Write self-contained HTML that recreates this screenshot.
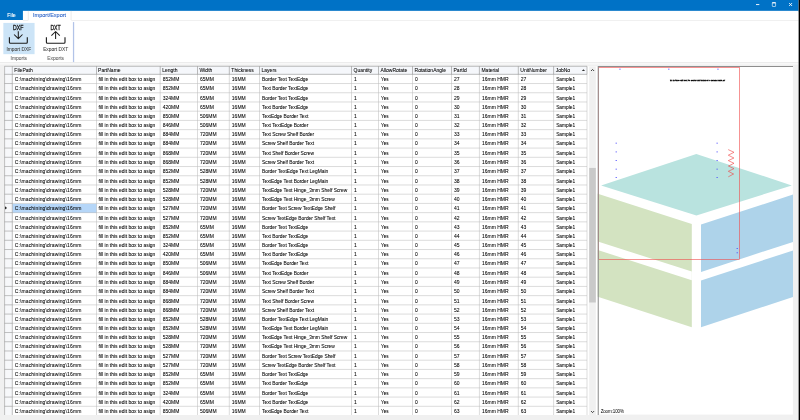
<!DOCTYPE html>
<html lang="en"><head><meta charset="utf-8"><title>Import/Export</title>
<style>
html,body{margin:0;padding:0;background:#f0f0f0;overflow:hidden;}
body{width:800px;height:420px;position:relative;font-family:"Liberation Sans",sans-serif;}
#app{position:absolute;left:0;top:0;width:1917px;height:1008px;transform:scale(0.4166667) translateZ(0);transform-origin:0 0;font-size:12px;color:#000;overflow:hidden;}
#edge{position:absolute;left:799px;top:0;width:1px;height:420px;background:#000;}
#edge2{position:absolute;left:798px;top:0;width:1px;height:420px;background:rgba(0,0,0,0.35);}
#ov{position:absolute;left:0;top:0;pointer-events:none;}
#title{position:absolute;left:0;top:0;width:1917px;height:28px;background:#0072c6;}
#tabs{position:absolute;left:0;top:26px;width:1917px;height:21.5px;background:rgba(255,255,255,0.996);}
#filetab{position:absolute;left:0;top:24px;width:55.2px;height:23.5px;background:rgba(0,114,198,0.996);color:#fff;-webkit-text-stroke:0.25px #fff;text-align:center;line-height:25px;font-size:12.5px;}
#ietab{position:absolute;left:67px;top:0;width:104px;height:22px;border-left:1px solid #cfcfcf;border-right:1px solid #cfcfcf;box-sizing:border-box;color:#2a62c8;-webkit-text-stroke:0.2px #2a62c8;text-align:center;line-height:21px;font-size:13.2px;}
#ribbon{position:absolute;left:0;top:47.5px;width:1917px;height:102.6px;background:rgba(255,255,255,0.996);border-bottom:1.4px solid #d9d9d9;box-sizing:border-box;}
.tl{position:absolute;top:47.6px;height:1.3px;background:#dcdcdc;z-index:3;}
#band{position:absolute;left:0;top:150.1px;width:1917px;height:4.6px;background:#f8f8f8;}
.btn{position:absolute;top:7.6px;width:75px;height:75px;text-align:center;}
.btn.hot{background:rgba(204,228,247,0.996);}
.btn .lbl{position:absolute;left:0;right:0;top:55.5px;font-size:11.6px;line-height:14px;color:#444;-webkit-text-stroke:0.15px #444;white-space:nowrap;}
.glbl{position:absolute;top:84.6px;width:75px;text-align:center;font-size:11.8px;line-height:14px;color:#666;-webkit-text-stroke:0.15px #666;}
.gsep{position:absolute;left:174.6px;top:5px;width:3.8px;height:96px;background:#b2c3e8;}
.grid{position:absolute;background:rgba(255,255,255,0.996);overflow:hidden;}
.hrow{position:absolute;left:0;top:0;right:0;}
.hc{position:absolute;top:0;bottom:0;box-sizing:border-box;background:rgba(245,247,251,0.996);white-space:nowrap;overflow:hidden;display:flex;align-items:center;padding-left:4.9px;}

.hc span{line-height:14px;font-size:12px;color:#000;-webkit-text-stroke:0.14px #000;position:relative;top:0.6px;}
.row{position:absolute;left:0;right:0;}
.c,.rh{position:absolute;top:0;bottom:0;box-sizing:border-box;white-space:nowrap;overflow:hidden;display:flex;align-items:center;padding-left:6.1px;}
.row .rh{background:#f7f8fa;padding:0;}
.ind{position:absolute;left:1.2px;top:6.4px;width:0;height:0;border-top:4.6px solid transparent;border-bottom:4.6px solid transparent;border-left:5.5px solid #222;}
.c span{line-height:14px;font-size:12px;color:#000;-webkit-text-stroke:0.14px #000;position:relative;top:0.7px;}
.c.fp span{letter-spacing:0.33px;}
.c.ly span{font-size:11.65px;}
.c.pn{padding-left:4.6px;}
.hc.pn{padding-left:3.8px;}
.c.fp{padding-left:5.8px;}
.c.jn span{font-size:11.6px;}
.c.ar span{font-size:11px;}
.c.cur{background:rgba(181,214,248,0.996);}
.sb{position:absolute;background:#f0f0f0;}
.thumb{position:absolute;left:0;right:0;background:#c9c9c9;}
#panel{position:absolute;background:rgba(255,255,255,0.996);overflow:hidden;}
#zoom{position:absolute;font-size:10.8px;letter-spacing:-0.3px;line-height:14px;color:#000;white-space:nowrap;}

</style></head>
<body>
<div id="app">
<div id="title"></div>
<div id="tabs"><div id="ietab">Import/Export</div></div>
<div id="filetab">File</div>
<div id="band"></div>
<div class="tl" style="left:55px;width:12.5px"></div><div class="tl" style="left:171px;width:1746px"></div>
<div id="ribbon">
<div class="btn hot" style="left:7.6px"><div class="lbl">Import DXF</div></div>
<div class="btn" style="left:96px"><div class="lbl">Export DXT</div></div>
<div class="glbl" style="left:7.6px">Imports</div>
<div class="glbl" style="left:96px">Exports</div>
<div class="gsep"></div>
</div>
<div class="grid" style="left:10.8px;top:159.0px;width:1423.44px;height:837.0px">
<div class="hrow" style="height:19.8px"><div class="hc rh" style="left:0.0px;width:18.72px"><span></span></div><div class="hc fp" style="left:18.72px;width:202.08px"><span>FilePath</span></div><div class="hc pn" style="left:220.8px;width:152.88px"><span>PartName</span></div><div class="hc ln" style="left:373.68px;width:89.52px"><span>Length</span></div><div class="hc wd" style="left:463.2px;width:76.32px"><span>Width</span></div><div class="hc th" style="left:539.52px;width:72.48px"><span>Thickness</span></div><div class="hc ly" style="left:612.0px;width:220.8px"><span>Layers</span></div><div class="hc qt" style="left:832.8px;width:64.8px"><span>Quantity</span></div><div class="hc ar" style="left:897.6px;width:81.6px"><span>AllowRotate</span></div><div class="hc ra" style="left:979.2px;width:93.6px"><span>RotationAngle</span></div><div class="hc pi" style="left:1072.8px;width:66.96px"><span>PartId</span></div><div class="hc mt" style="left:1139.76px;width:93.36px"><span>Material</span></div><div class="hc un" style="left:1233.12px;width:84.72px"><span>UnitNumber</span></div><div class="hc jn" style="left:1317.84px;width:80.16px"><span>JobNo</span></div></div>
<div class="row" style="top:19.8px;height:22.133px"><div class="rh rh" style="left:0.0px;width:18.72px"></div><div class="c fp" style="left:18.72px;width:202.08px"><span>C:\machining\drawing\16mm</span></div><div class="c pn" style="left:220.8px;width:152.88px"><span>fill in this edit box to asign</span></div><div class="c ln" style="left:373.68px;width:89.52px"><span>852MM</span></div><div class="c wd" style="left:463.2px;width:76.32px"><span>65MM</span></div><div class="c th" style="left:539.52px;width:72.48px"><span>16MM</span></div><div class="c ly" style="left:612.0px;width:220.8px"><span>Border Text TextEdge</span></div><div class="c qt" style="left:832.8px;width:64.8px"><span>1</span></div><div class="c ar" style="left:897.6px;width:81.6px"><span>Yes</span></div><div class="c ra" style="left:979.2px;width:93.6px"><span>0</span></div><div class="c pi" style="left:1072.8px;width:66.96px"><span>27</span></div><div class="c mt" style="left:1139.76px;width:93.36px"><span>16mm HMR</span></div><div class="c un" style="left:1233.12px;width:84.72px"><span>27</span></div><div class="c jn" style="left:1317.84px;width:80.16px"><span>Sample1</span></div></div>
<div class="row" style="top:41.93px;height:22.133px"><div class="rh rh" style="left:0.0px;width:18.72px"></div><div class="c fp" style="left:18.72px;width:202.08px"><span>C:\machining\drawing\16mm</span></div><div class="c pn" style="left:220.8px;width:152.88px"><span>fill in this edit box to asign</span></div><div class="c ln" style="left:373.68px;width:89.52px"><span>852MM</span></div><div class="c wd" style="left:463.2px;width:76.32px"><span>65MM</span></div><div class="c th" style="left:539.52px;width:72.48px"><span>16MM</span></div><div class="c ly" style="left:612.0px;width:220.8px"><span>Text Border TextEdge</span></div><div class="c qt" style="left:832.8px;width:64.8px"><span>1</span></div><div class="c ar" style="left:897.6px;width:81.6px"><span>Yes</span></div><div class="c ra" style="left:979.2px;width:93.6px"><span>0</span></div><div class="c pi" style="left:1072.8px;width:66.96px"><span>28</span></div><div class="c mt" style="left:1139.76px;width:93.36px"><span>16mm HMR</span></div><div class="c un" style="left:1233.12px;width:84.72px"><span>28</span></div><div class="c jn" style="left:1317.84px;width:80.16px"><span>Sample1</span></div></div>
<div class="row" style="top:64.07px;height:22.133px"><div class="rh rh" style="left:0.0px;width:18.72px"></div><div class="c fp" style="left:18.72px;width:202.08px"><span>C:\machining\drawing\16mm</span></div><div class="c pn" style="left:220.8px;width:152.88px"><span>fill in this edit box to asign</span></div><div class="c ln" style="left:373.68px;width:89.52px"><span>324MM</span></div><div class="c wd" style="left:463.2px;width:76.32px"><span>65MM</span></div><div class="c th" style="left:539.52px;width:72.48px"><span>16MM</span></div><div class="c ly" style="left:612.0px;width:220.8px"><span>Border Text TextEdge</span></div><div class="c qt" style="left:832.8px;width:64.8px"><span>1</span></div><div class="c ar" style="left:897.6px;width:81.6px"><span>Yes</span></div><div class="c ra" style="left:979.2px;width:93.6px"><span>0</span></div><div class="c pi" style="left:1072.8px;width:66.96px"><span>29</span></div><div class="c mt" style="left:1139.76px;width:93.36px"><span>16mm HMR</span></div><div class="c un" style="left:1233.12px;width:84.72px"><span>29</span></div><div class="c jn" style="left:1317.84px;width:80.16px"><span>Sample1</span></div></div>
<div class="row" style="top:86.2px;height:22.133px"><div class="rh rh" style="left:0.0px;width:18.72px"></div><div class="c fp" style="left:18.72px;width:202.08px"><span>C:\machining\drawing\16mm</span></div><div class="c pn" style="left:220.8px;width:152.88px"><span>fill in this edit box to asign</span></div><div class="c ln" style="left:373.68px;width:89.52px"><span>420MM</span></div><div class="c wd" style="left:463.2px;width:76.32px"><span>65MM</span></div><div class="c th" style="left:539.52px;width:72.48px"><span>16MM</span></div><div class="c ly" style="left:612.0px;width:220.8px"><span>Text Border TextEdge</span></div><div class="c qt" style="left:832.8px;width:64.8px"><span>1</span></div><div class="c ar" style="left:897.6px;width:81.6px"><span>Yes</span></div><div class="c ra" style="left:979.2px;width:93.6px"><span>0</span></div><div class="c pi" style="left:1072.8px;width:66.96px"><span>30</span></div><div class="c mt" style="left:1139.76px;width:93.36px"><span>16mm HMR</span></div><div class="c un" style="left:1233.12px;width:84.72px"><span>30</span></div><div class="c jn" style="left:1317.84px;width:80.16px"><span>Sample1</span></div></div>
<div class="row" style="top:108.33px;height:22.133px"><div class="rh rh" style="left:0.0px;width:18.72px"></div><div class="c fp" style="left:18.72px;width:202.08px"><span>C:\machining\drawing\16mm</span></div><div class="c pn" style="left:220.8px;width:152.88px"><span>fill in this edit box to asign</span></div><div class="c ln" style="left:373.68px;width:89.52px"><span>850MM</span></div><div class="c wd" style="left:463.2px;width:76.32px"><span>506MM</span></div><div class="c th" style="left:539.52px;width:72.48px"><span>16MM</span></div><div class="c ly" style="left:612.0px;width:220.8px"><span>TextEdge Border Text</span></div><div class="c qt" style="left:832.8px;width:64.8px"><span>1</span></div><div class="c ar" style="left:897.6px;width:81.6px"><span>Yes</span></div><div class="c ra" style="left:979.2px;width:93.6px"><span>0</span></div><div class="c pi" style="left:1072.8px;width:66.96px"><span>31</span></div><div class="c mt" style="left:1139.76px;width:93.36px"><span>16mm HMR</span></div><div class="c un" style="left:1233.12px;width:84.72px"><span>31</span></div><div class="c jn" style="left:1317.84px;width:80.16px"><span>Sample1</span></div></div>
<div class="row" style="top:130.47px;height:22.133px"><div class="rh rh" style="left:0.0px;width:18.72px"></div><div class="c fp" style="left:18.72px;width:202.08px"><span>C:\machining\drawing\16mm</span></div><div class="c pn" style="left:220.8px;width:152.88px"><span>fill in this edit box to asign</span></div><div class="c ln" style="left:373.68px;width:89.52px"><span>846MM</span></div><div class="c wd" style="left:463.2px;width:76.32px"><span>506MM</span></div><div class="c th" style="left:539.52px;width:72.48px"><span>16MM</span></div><div class="c ly" style="left:612.0px;width:220.8px"><span>Text TextEdge Border</span></div><div class="c qt" style="left:832.8px;width:64.8px"><span>1</span></div><div class="c ar" style="left:897.6px;width:81.6px"><span>Yes</span></div><div class="c ra" style="left:979.2px;width:93.6px"><span>0</span></div><div class="c pi" style="left:1072.8px;width:66.96px"><span>32</span></div><div class="c mt" style="left:1139.76px;width:93.36px"><span>16mm HMR</span></div><div class="c un" style="left:1233.12px;width:84.72px"><span>32</span></div><div class="c jn" style="left:1317.84px;width:80.16px"><span>Sample1</span></div></div>
<div class="row" style="top:152.6px;height:22.133px"><div class="rh rh" style="left:0.0px;width:18.72px"></div><div class="c fp" style="left:18.72px;width:202.08px"><span>C:\machining\drawing\16mm</span></div><div class="c pn" style="left:220.8px;width:152.88px"><span>fill in this edit box to asign</span></div><div class="c ln" style="left:373.68px;width:89.52px"><span>884MM</span></div><div class="c wd" style="left:463.2px;width:76.32px"><span>720MM</span></div><div class="c th" style="left:539.52px;width:72.48px"><span>16MM</span></div><div class="c ly" style="left:612.0px;width:220.8px"><span>Text Screw Shelf Border</span></div><div class="c qt" style="left:832.8px;width:64.8px"><span>1</span></div><div class="c ar" style="left:897.6px;width:81.6px"><span>Yes</span></div><div class="c ra" style="left:979.2px;width:93.6px"><span>0</span></div><div class="c pi" style="left:1072.8px;width:66.96px"><span>33</span></div><div class="c mt" style="left:1139.76px;width:93.36px"><span>16mm HMR</span></div><div class="c un" style="left:1233.12px;width:84.72px"><span>33</span></div><div class="c jn" style="left:1317.84px;width:80.16px"><span>Sample1</span></div></div>
<div class="row" style="top:174.73px;height:22.133px"><div class="rh rh" style="left:0.0px;width:18.72px"></div><div class="c fp" style="left:18.72px;width:202.08px"><span>C:\machining\drawing\16mm</span></div><div class="c pn" style="left:220.8px;width:152.88px"><span>fill in this edit box to asign</span></div><div class="c ln" style="left:373.68px;width:89.52px"><span>884MM</span></div><div class="c wd" style="left:463.2px;width:76.32px"><span>720MM</span></div><div class="c th" style="left:539.52px;width:72.48px"><span>16MM</span></div><div class="c ly" style="left:612.0px;width:220.8px"><span>Screw Shelf Border Text</span></div><div class="c qt" style="left:832.8px;width:64.8px"><span>1</span></div><div class="c ar" style="left:897.6px;width:81.6px"><span>Yes</span></div><div class="c ra" style="left:979.2px;width:93.6px"><span>0</span></div><div class="c pi" style="left:1072.8px;width:66.96px"><span>34</span></div><div class="c mt" style="left:1139.76px;width:93.36px"><span>16mm HMR</span></div><div class="c un" style="left:1233.12px;width:84.72px"><span>34</span></div><div class="c jn" style="left:1317.84px;width:80.16px"><span>Sample1</span></div></div>
<div class="row" style="top:196.86px;height:22.133px"><div class="rh rh" style="left:0.0px;width:18.72px"></div><div class="c fp" style="left:18.72px;width:202.08px"><span>C:\machining\drawing\16mm</span></div><div class="c pn" style="left:220.8px;width:152.88px"><span>fill in this edit box to asign</span></div><div class="c ln" style="left:373.68px;width:89.52px"><span>868MM</span></div><div class="c wd" style="left:463.2px;width:76.32px"><span>720MM</span></div><div class="c th" style="left:539.52px;width:72.48px"><span>16MM</span></div><div class="c ly" style="left:612.0px;width:220.8px"><span>Text Shelf Border Screw</span></div><div class="c qt" style="left:832.8px;width:64.8px"><span>1</span></div><div class="c ar" style="left:897.6px;width:81.6px"><span>Yes</span></div><div class="c ra" style="left:979.2px;width:93.6px"><span>0</span></div><div class="c pi" style="left:1072.8px;width:66.96px"><span>35</span></div><div class="c mt" style="left:1139.76px;width:93.36px"><span>16mm HMR</span></div><div class="c un" style="left:1233.12px;width:84.72px"><span>35</span></div><div class="c jn" style="left:1317.84px;width:80.16px"><span>Sample1</span></div></div>
<div class="row" style="top:219.0px;height:22.133px"><div class="rh rh" style="left:0.0px;width:18.72px"></div><div class="c fp" style="left:18.72px;width:202.08px"><span>C:\machining\drawing\16mm</span></div><div class="c pn" style="left:220.8px;width:152.88px"><span>fill in this edit box to asign</span></div><div class="c ln" style="left:373.68px;width:89.52px"><span>868MM</span></div><div class="c wd" style="left:463.2px;width:76.32px"><span>720MM</span></div><div class="c th" style="left:539.52px;width:72.48px"><span>16MM</span></div><div class="c ly" style="left:612.0px;width:220.8px"><span>Screw Shelf Border Text</span></div><div class="c qt" style="left:832.8px;width:64.8px"><span>1</span></div><div class="c ar" style="left:897.6px;width:81.6px"><span>Yes</span></div><div class="c ra" style="left:979.2px;width:93.6px"><span>0</span></div><div class="c pi" style="left:1072.8px;width:66.96px"><span>36</span></div><div class="c mt" style="left:1139.76px;width:93.36px"><span>16mm HMR</span></div><div class="c un" style="left:1233.12px;width:84.72px"><span>36</span></div><div class="c jn" style="left:1317.84px;width:80.16px"><span>Sample1</span></div></div>
<div class="row" style="top:241.13px;height:22.133px"><div class="rh rh" style="left:0.0px;width:18.72px"></div><div class="c fp" style="left:18.72px;width:202.08px"><span>C:\machining\drawing\16mm</span></div><div class="c pn" style="left:220.8px;width:152.88px"><span>fill in this edit box to asign</span></div><div class="c ln" style="left:373.68px;width:89.52px"><span>852MM</span></div><div class="c wd" style="left:463.2px;width:76.32px"><span>528MM</span></div><div class="c th" style="left:539.52px;width:72.48px"><span>16MM</span></div><div class="c ly" style="left:612.0px;width:220.8px"><span>Border TextEdge Text LegMain</span></div><div class="c qt" style="left:832.8px;width:64.8px"><span>1</span></div><div class="c ar" style="left:897.6px;width:81.6px"><span>Yes</span></div><div class="c ra" style="left:979.2px;width:93.6px"><span>0</span></div><div class="c pi" style="left:1072.8px;width:66.96px"><span>37</span></div><div class="c mt" style="left:1139.76px;width:93.36px"><span>16mm HMR</span></div><div class="c un" style="left:1233.12px;width:84.72px"><span>37</span></div><div class="c jn" style="left:1317.84px;width:80.16px"><span>Sample1</span></div></div>
<div class="row" style="top:263.26px;height:22.133px"><div class="rh rh" style="left:0.0px;width:18.72px"></div><div class="c fp" style="left:18.72px;width:202.08px"><span>C:\machining\drawing\16mm</span></div><div class="c pn" style="left:220.8px;width:152.88px"><span>fill in this edit box to asign</span></div><div class="c ln" style="left:373.68px;width:89.52px"><span>852MM</span></div><div class="c wd" style="left:463.2px;width:76.32px"><span>528MM</span></div><div class="c th" style="left:539.52px;width:72.48px"><span>16MM</span></div><div class="c ly" style="left:612.0px;width:220.8px"><span>TextEdge Text Border LegMain</span></div><div class="c qt" style="left:832.8px;width:64.8px"><span>1</span></div><div class="c ar" style="left:897.6px;width:81.6px"><span>Yes</span></div><div class="c ra" style="left:979.2px;width:93.6px"><span>0</span></div><div class="c pi" style="left:1072.8px;width:66.96px"><span>38</span></div><div class="c mt" style="left:1139.76px;width:93.36px"><span>16mm HMR</span></div><div class="c un" style="left:1233.12px;width:84.72px"><span>38</span></div><div class="c jn" style="left:1317.84px;width:80.16px"><span>Sample1</span></div></div>
<div class="row" style="top:285.4px;height:22.133px"><div class="rh rh" style="left:0.0px;width:18.72px"></div><div class="c fp" style="left:18.72px;width:202.08px"><span>C:\machining\drawing\16mm</span></div><div class="c pn" style="left:220.8px;width:152.88px"><span>fill in this edit box to asign</span></div><div class="c ln" style="left:373.68px;width:89.52px"><span>528MM</span></div><div class="c wd" style="left:463.2px;width:76.32px"><span>720MM</span></div><div class="c th" style="left:539.52px;width:72.48px"><span>16MM</span></div><div class="c ly" style="left:612.0px;width:220.8px"><span>TextEdge Text Hinge_3mm Shelf Screw</span></div><div class="c qt" style="left:832.8px;width:64.8px"><span>1</span></div><div class="c ar" style="left:897.6px;width:81.6px"><span>Yes</span></div><div class="c ra" style="left:979.2px;width:93.6px"><span>0</span></div><div class="c pi" style="left:1072.8px;width:66.96px"><span>39</span></div><div class="c mt" style="left:1139.76px;width:93.36px"><span>16mm HMR</span></div><div class="c un" style="left:1233.12px;width:84.72px"><span>39</span></div><div class="c jn" style="left:1317.84px;width:80.16px"><span>Sample1</span></div></div>
<div class="row" style="top:307.53px;height:22.133px"><div class="rh rh" style="left:0.0px;width:18.72px"></div><div class="c fp" style="left:18.72px;width:202.08px"><span>C:\machining\drawing\16mm</span></div><div class="c pn" style="left:220.8px;width:152.88px"><span>fill in this edit box to asign</span></div><div class="c ln" style="left:373.68px;width:89.52px"><span>528MM</span></div><div class="c wd" style="left:463.2px;width:76.32px"><span>720MM</span></div><div class="c th" style="left:539.52px;width:72.48px"><span>16MM</span></div><div class="c ly" style="left:612.0px;width:220.8px"><span>TextEdge Text Hinge_3mm Screw</span></div><div class="c qt" style="left:832.8px;width:64.8px"><span>1</span></div><div class="c ar" style="left:897.6px;width:81.6px"><span>Yes</span></div><div class="c ra" style="left:979.2px;width:93.6px"><span>0</span></div><div class="c pi" style="left:1072.8px;width:66.96px"><span>40</span></div><div class="c mt" style="left:1139.76px;width:93.36px"><span>16mm HMR</span></div><div class="c un" style="left:1233.12px;width:84.72px"><span>40</span></div><div class="c jn" style="left:1317.84px;width:80.16px"><span>Sample1</span></div></div>
<div class="row" style="top:329.66px;height:22.133px"><div class="rh rh" style="left:0.0px;width:18.72px"><i class="ind"></i></div><div class="c fp cur" style="left:18.72px;width:202.08px"><span>C:\machining\drawing\16mm</span></div><div class="c pn" style="left:220.8px;width:152.88px"><span>fill in this edit box to asign</span></div><div class="c ln" style="left:373.68px;width:89.52px"><span>527MM</span></div><div class="c wd" style="left:463.2px;width:76.32px"><span>720MM</span></div><div class="c th" style="left:539.52px;width:72.48px"><span>16MM</span></div><div class="c ly" style="left:612.0px;width:220.8px"><span>Border Text Screw TextEdge Shelf</span></div><div class="c qt" style="left:832.8px;width:64.8px"><span>1</span></div><div class="c ar" style="left:897.6px;width:81.6px"><span>Yes</span></div><div class="c ra" style="left:979.2px;width:93.6px"><span>0</span></div><div class="c pi" style="left:1072.8px;width:66.96px"><span>41</span></div><div class="c mt" style="left:1139.76px;width:93.36px"><span>16mm HMR</span></div><div class="c un" style="left:1233.12px;width:84.72px"><span>41</span></div><div class="c jn" style="left:1317.84px;width:80.16px"><span>Sample1</span></div></div>
<div class="row" style="top:351.8px;height:22.133px"><div class="rh rh" style="left:0.0px;width:18.72px"></div><div class="c fp" style="left:18.72px;width:202.08px"><span>C:\machining\drawing\16mm</span></div><div class="c pn" style="left:220.8px;width:152.88px"><span>fill in this edit box to asign</span></div><div class="c ln" style="left:373.68px;width:89.52px"><span>527MM</span></div><div class="c wd" style="left:463.2px;width:76.32px"><span>720MM</span></div><div class="c th" style="left:539.52px;width:72.48px"><span>16MM</span></div><div class="c ly" style="left:612.0px;width:220.8px"><span>Screw TextEdge Border Shelf Text</span></div><div class="c qt" style="left:832.8px;width:64.8px"><span>1</span></div><div class="c ar" style="left:897.6px;width:81.6px"><span>Yes</span></div><div class="c ra" style="left:979.2px;width:93.6px"><span>0</span></div><div class="c pi" style="left:1072.8px;width:66.96px"><span>42</span></div><div class="c mt" style="left:1139.76px;width:93.36px"><span>16mm HMR</span></div><div class="c un" style="left:1233.12px;width:84.72px"><span>42</span></div><div class="c jn" style="left:1317.84px;width:80.16px"><span>Sample1</span></div></div>
<div class="row" style="top:373.93px;height:22.133px"><div class="rh rh" style="left:0.0px;width:18.72px"></div><div class="c fp" style="left:18.72px;width:202.08px"><span>C:\machining\drawing\16mm</span></div><div class="c pn" style="left:220.8px;width:152.88px"><span>fill in this edit box to asign</span></div><div class="c ln" style="left:373.68px;width:89.52px"><span>852MM</span></div><div class="c wd" style="left:463.2px;width:76.32px"><span>65MM</span></div><div class="c th" style="left:539.52px;width:72.48px"><span>16MM</span></div><div class="c ly" style="left:612.0px;width:220.8px"><span>Border Text TextEdge</span></div><div class="c qt" style="left:832.8px;width:64.8px"><span>1</span></div><div class="c ar" style="left:897.6px;width:81.6px"><span>Yes</span></div><div class="c ra" style="left:979.2px;width:93.6px"><span>0</span></div><div class="c pi" style="left:1072.8px;width:66.96px"><span>43</span></div><div class="c mt" style="left:1139.76px;width:93.36px"><span>16mm HMR</span></div><div class="c un" style="left:1233.12px;width:84.72px"><span>43</span></div><div class="c jn" style="left:1317.84px;width:80.16px"><span>Sample1</span></div></div>
<div class="row" style="top:396.06px;height:22.133px"><div class="rh rh" style="left:0.0px;width:18.72px"></div><div class="c fp" style="left:18.72px;width:202.08px"><span>C:\machining\drawing\16mm</span></div><div class="c pn" style="left:220.8px;width:152.88px"><span>fill in this edit box to asign</span></div><div class="c ln" style="left:373.68px;width:89.52px"><span>852MM</span></div><div class="c wd" style="left:463.2px;width:76.32px"><span>65MM</span></div><div class="c th" style="left:539.52px;width:72.48px"><span>16MM</span></div><div class="c ly" style="left:612.0px;width:220.8px"><span>Text Border TextEdge</span></div><div class="c qt" style="left:832.8px;width:64.8px"><span>1</span></div><div class="c ar" style="left:897.6px;width:81.6px"><span>Yes</span></div><div class="c ra" style="left:979.2px;width:93.6px"><span>0</span></div><div class="c pi" style="left:1072.8px;width:66.96px"><span>44</span></div><div class="c mt" style="left:1139.76px;width:93.36px"><span>16mm HMR</span></div><div class="c un" style="left:1233.12px;width:84.72px"><span>44</span></div><div class="c jn" style="left:1317.84px;width:80.16px"><span>Sample1</span></div></div>
<div class="row" style="top:418.19px;height:22.133px"><div class="rh rh" style="left:0.0px;width:18.72px"></div><div class="c fp" style="left:18.72px;width:202.08px"><span>C:\machining\drawing\16mm</span></div><div class="c pn" style="left:220.8px;width:152.88px"><span>fill in this edit box to asign</span></div><div class="c ln" style="left:373.68px;width:89.52px"><span>324MM</span></div><div class="c wd" style="left:463.2px;width:76.32px"><span>65MM</span></div><div class="c th" style="left:539.52px;width:72.48px"><span>16MM</span></div><div class="c ly" style="left:612.0px;width:220.8px"><span>Border Text TextEdge</span></div><div class="c qt" style="left:832.8px;width:64.8px"><span>1</span></div><div class="c ar" style="left:897.6px;width:81.6px"><span>Yes</span></div><div class="c ra" style="left:979.2px;width:93.6px"><span>0</span></div><div class="c pi" style="left:1072.8px;width:66.96px"><span>45</span></div><div class="c mt" style="left:1139.76px;width:93.36px"><span>16mm HMR</span></div><div class="c un" style="left:1233.12px;width:84.72px"><span>45</span></div><div class="c jn" style="left:1317.84px;width:80.16px"><span>Sample1</span></div></div>
<div class="row" style="top:440.33px;height:22.133px"><div class="rh rh" style="left:0.0px;width:18.72px"></div><div class="c fp" style="left:18.72px;width:202.08px"><span>C:\machining\drawing\16mm</span></div><div class="c pn" style="left:220.8px;width:152.88px"><span>fill in this edit box to asign</span></div><div class="c ln" style="left:373.68px;width:89.52px"><span>420MM</span></div><div class="c wd" style="left:463.2px;width:76.32px"><span>65MM</span></div><div class="c th" style="left:539.52px;width:72.48px"><span>16MM</span></div><div class="c ly" style="left:612.0px;width:220.8px"><span>Text Border TextEdge</span></div><div class="c qt" style="left:832.8px;width:64.8px"><span>1</span></div><div class="c ar" style="left:897.6px;width:81.6px"><span>Yes</span></div><div class="c ra" style="left:979.2px;width:93.6px"><span>0</span></div><div class="c pi" style="left:1072.8px;width:66.96px"><span>46</span></div><div class="c mt" style="left:1139.76px;width:93.36px"><span>16mm HMR</span></div><div class="c un" style="left:1233.12px;width:84.72px"><span>46</span></div><div class="c jn" style="left:1317.84px;width:80.16px"><span>Sample1</span></div></div>
<div class="row" style="top:462.46px;height:22.133px"><div class="rh rh" style="left:0.0px;width:18.72px"></div><div class="c fp" style="left:18.72px;width:202.08px"><span>C:\machining\drawing\16mm</span></div><div class="c pn" style="left:220.8px;width:152.88px"><span>fill in this edit box to asign</span></div><div class="c ln" style="left:373.68px;width:89.52px"><span>850MM</span></div><div class="c wd" style="left:463.2px;width:76.32px"><span>506MM</span></div><div class="c th" style="left:539.52px;width:72.48px"><span>16MM</span></div><div class="c ly" style="left:612.0px;width:220.8px"><span>TextEdge Border Text</span></div><div class="c qt" style="left:832.8px;width:64.8px"><span>1</span></div><div class="c ar" style="left:897.6px;width:81.6px"><span>Yes</span></div><div class="c ra" style="left:979.2px;width:93.6px"><span>0</span></div><div class="c pi" style="left:1072.8px;width:66.96px"><span>47</span></div><div class="c mt" style="left:1139.76px;width:93.36px"><span>16mm HMR</span></div><div class="c un" style="left:1233.12px;width:84.72px"><span>47</span></div><div class="c jn" style="left:1317.84px;width:80.16px"><span>Sample1</span></div></div>
<div class="row" style="top:484.59px;height:22.133px"><div class="rh rh" style="left:0.0px;width:18.72px"></div><div class="c fp" style="left:18.72px;width:202.08px"><span>C:\machining\drawing\16mm</span></div><div class="c pn" style="left:220.8px;width:152.88px"><span>fill in this edit box to asign</span></div><div class="c ln" style="left:373.68px;width:89.52px"><span>846MM</span></div><div class="c wd" style="left:463.2px;width:76.32px"><span>506MM</span></div><div class="c th" style="left:539.52px;width:72.48px"><span>16MM</span></div><div class="c ly" style="left:612.0px;width:220.8px"><span>Text TextEdge Border</span></div><div class="c qt" style="left:832.8px;width:64.8px"><span>1</span></div><div class="c ar" style="left:897.6px;width:81.6px"><span>Yes</span></div><div class="c ra" style="left:979.2px;width:93.6px"><span>0</span></div><div class="c pi" style="left:1072.8px;width:66.96px"><span>48</span></div><div class="c mt" style="left:1139.76px;width:93.36px"><span>16mm HMR</span></div><div class="c un" style="left:1233.12px;width:84.72px"><span>48</span></div><div class="c jn" style="left:1317.84px;width:80.16px"><span>Sample1</span></div></div>
<div class="row" style="top:506.73px;height:22.133px"><div class="rh rh" style="left:0.0px;width:18.72px"></div><div class="c fp" style="left:18.72px;width:202.08px"><span>C:\machining\drawing\16mm</span></div><div class="c pn" style="left:220.8px;width:152.88px"><span>fill in this edit box to asign</span></div><div class="c ln" style="left:373.68px;width:89.52px"><span>884MM</span></div><div class="c wd" style="left:463.2px;width:76.32px"><span>720MM</span></div><div class="c th" style="left:539.52px;width:72.48px"><span>16MM</span></div><div class="c ly" style="left:612.0px;width:220.8px"><span>Text Screw Shelf Border</span></div><div class="c qt" style="left:832.8px;width:64.8px"><span>1</span></div><div class="c ar" style="left:897.6px;width:81.6px"><span>Yes</span></div><div class="c ra" style="left:979.2px;width:93.6px"><span>0</span></div><div class="c pi" style="left:1072.8px;width:66.96px"><span>49</span></div><div class="c mt" style="left:1139.76px;width:93.36px"><span>16mm HMR</span></div><div class="c un" style="left:1233.12px;width:84.72px"><span>49</span></div><div class="c jn" style="left:1317.84px;width:80.16px"><span>Sample1</span></div></div>
<div class="row" style="top:528.86px;height:22.133px"><div class="rh rh" style="left:0.0px;width:18.72px"></div><div class="c fp" style="left:18.72px;width:202.08px"><span>C:\machining\drawing\16mm</span></div><div class="c pn" style="left:220.8px;width:152.88px"><span>fill in this edit box to asign</span></div><div class="c ln" style="left:373.68px;width:89.52px"><span>884MM</span></div><div class="c wd" style="left:463.2px;width:76.32px"><span>720MM</span></div><div class="c th" style="left:539.52px;width:72.48px"><span>16MM</span></div><div class="c ly" style="left:612.0px;width:220.8px"><span>Screw Shelf Border Text</span></div><div class="c qt" style="left:832.8px;width:64.8px"><span>1</span></div><div class="c ar" style="left:897.6px;width:81.6px"><span>Yes</span></div><div class="c ra" style="left:979.2px;width:93.6px"><span>0</span></div><div class="c pi" style="left:1072.8px;width:66.96px"><span>50</span></div><div class="c mt" style="left:1139.76px;width:93.36px"><span>16mm HMR</span></div><div class="c un" style="left:1233.12px;width:84.72px"><span>50</span></div><div class="c jn" style="left:1317.84px;width:80.16px"><span>Sample1</span></div></div>
<div class="row" style="top:550.99px;height:22.133px"><div class="rh rh" style="left:0.0px;width:18.72px"></div><div class="c fp" style="left:18.72px;width:202.08px"><span>C:\machining\drawing\16mm</span></div><div class="c pn" style="left:220.8px;width:152.88px"><span>fill in this edit box to asign</span></div><div class="c ln" style="left:373.68px;width:89.52px"><span>868MM</span></div><div class="c wd" style="left:463.2px;width:76.32px"><span>720MM</span></div><div class="c th" style="left:539.52px;width:72.48px"><span>16MM</span></div><div class="c ly" style="left:612.0px;width:220.8px"><span>Text Shelf Border Screw</span></div><div class="c qt" style="left:832.8px;width:64.8px"><span>1</span></div><div class="c ar" style="left:897.6px;width:81.6px"><span>Yes</span></div><div class="c ra" style="left:979.2px;width:93.6px"><span>0</span></div><div class="c pi" style="left:1072.8px;width:66.96px"><span>51</span></div><div class="c mt" style="left:1139.76px;width:93.36px"><span>16mm HMR</span></div><div class="c un" style="left:1233.12px;width:84.72px"><span>51</span></div><div class="c jn" style="left:1317.84px;width:80.16px"><span>Sample1</span></div></div>
<div class="row" style="top:573.12px;height:22.133px"><div class="rh rh" style="left:0.0px;width:18.72px"></div><div class="c fp" style="left:18.72px;width:202.08px"><span>C:\machining\drawing\16mm</span></div><div class="c pn" style="left:220.8px;width:152.88px"><span>fill in this edit box to asign</span></div><div class="c ln" style="left:373.68px;width:89.52px"><span>868MM</span></div><div class="c wd" style="left:463.2px;width:76.32px"><span>720MM</span></div><div class="c th" style="left:539.52px;width:72.48px"><span>16MM</span></div><div class="c ly" style="left:612.0px;width:220.8px"><span>Screw Shelf Border Text</span></div><div class="c qt" style="left:832.8px;width:64.8px"><span>1</span></div><div class="c ar" style="left:897.6px;width:81.6px"><span>Yes</span></div><div class="c ra" style="left:979.2px;width:93.6px"><span>0</span></div><div class="c pi" style="left:1072.8px;width:66.96px"><span>52</span></div><div class="c mt" style="left:1139.76px;width:93.36px"><span>16mm HMR</span></div><div class="c un" style="left:1233.12px;width:84.72px"><span>52</span></div><div class="c jn" style="left:1317.84px;width:80.16px"><span>Sample1</span></div></div>
<div class="row" style="top:595.26px;height:22.133px"><div class="rh rh" style="left:0.0px;width:18.72px"></div><div class="c fp" style="left:18.72px;width:202.08px"><span>C:\machining\drawing\16mm</span></div><div class="c pn" style="left:220.8px;width:152.88px"><span>fill in this edit box to asign</span></div><div class="c ln" style="left:373.68px;width:89.52px"><span>852MM</span></div><div class="c wd" style="left:463.2px;width:76.32px"><span>528MM</span></div><div class="c th" style="left:539.52px;width:72.48px"><span>16MM</span></div><div class="c ly" style="left:612.0px;width:220.8px"><span>Border TextEdge Text LegMain</span></div><div class="c qt" style="left:832.8px;width:64.8px"><span>1</span></div><div class="c ar" style="left:897.6px;width:81.6px"><span>Yes</span></div><div class="c ra" style="left:979.2px;width:93.6px"><span>0</span></div><div class="c pi" style="left:1072.8px;width:66.96px"><span>53</span></div><div class="c mt" style="left:1139.76px;width:93.36px"><span>16mm HMR</span></div><div class="c un" style="left:1233.12px;width:84.72px"><span>53</span></div><div class="c jn" style="left:1317.84px;width:80.16px"><span>Sample1</span></div></div>
<div class="row" style="top:617.39px;height:22.133px"><div class="rh rh" style="left:0.0px;width:18.72px"></div><div class="c fp" style="left:18.72px;width:202.08px"><span>C:\machining\drawing\16mm</span></div><div class="c pn" style="left:220.8px;width:152.88px"><span>fill in this edit box to asign</span></div><div class="c ln" style="left:373.68px;width:89.52px"><span>852MM</span></div><div class="c wd" style="left:463.2px;width:76.32px"><span>528MM</span></div><div class="c th" style="left:539.52px;width:72.48px"><span>16MM</span></div><div class="c ly" style="left:612.0px;width:220.8px"><span>TextEdge Text Border LegMain</span></div><div class="c qt" style="left:832.8px;width:64.8px"><span>1</span></div><div class="c ar" style="left:897.6px;width:81.6px"><span>Yes</span></div><div class="c ra" style="left:979.2px;width:93.6px"><span>0</span></div><div class="c pi" style="left:1072.8px;width:66.96px"><span>54</span></div><div class="c mt" style="left:1139.76px;width:93.36px"><span>16mm HMR</span></div><div class="c un" style="left:1233.12px;width:84.72px"><span>54</span></div><div class="c jn" style="left:1317.84px;width:80.16px"><span>Sample1</span></div></div>
<div class="row" style="top:639.52px;height:22.133px"><div class="rh rh" style="left:0.0px;width:18.72px"></div><div class="c fp" style="left:18.72px;width:202.08px"><span>C:\machining\drawing\16mm</span></div><div class="c pn" style="left:220.8px;width:152.88px"><span>fill in this edit box to asign</span></div><div class="c ln" style="left:373.68px;width:89.52px"><span>528MM</span></div><div class="c wd" style="left:463.2px;width:76.32px"><span>720MM</span></div><div class="c th" style="left:539.52px;width:72.48px"><span>16MM</span></div><div class="c ly" style="left:612.0px;width:220.8px"><span>TextEdge Text Hinge_3mm Shelf Screw</span></div><div class="c qt" style="left:832.8px;width:64.8px"><span>1</span></div><div class="c ar" style="left:897.6px;width:81.6px"><span>Yes</span></div><div class="c ra" style="left:979.2px;width:93.6px"><span>0</span></div><div class="c pi" style="left:1072.8px;width:66.96px"><span>55</span></div><div class="c mt" style="left:1139.76px;width:93.36px"><span>16mm HMR</span></div><div class="c un" style="left:1233.12px;width:84.72px"><span>55</span></div><div class="c jn" style="left:1317.84px;width:80.16px"><span>Sample1</span></div></div>
<div class="row" style="top:661.66px;height:22.133px"><div class="rh rh" style="left:0.0px;width:18.72px"></div><div class="c fp" style="left:18.72px;width:202.08px"><span>C:\machining\drawing\16mm</span></div><div class="c pn" style="left:220.8px;width:152.88px"><span>fill in this edit box to asign</span></div><div class="c ln" style="left:373.68px;width:89.52px"><span>528MM</span></div><div class="c wd" style="left:463.2px;width:76.32px"><span>720MM</span></div><div class="c th" style="left:539.52px;width:72.48px"><span>16MM</span></div><div class="c ly" style="left:612.0px;width:220.8px"><span>TextEdge Text Hinge_3mm Screw</span></div><div class="c qt" style="left:832.8px;width:64.8px"><span>1</span></div><div class="c ar" style="left:897.6px;width:81.6px"><span>Yes</span></div><div class="c ra" style="left:979.2px;width:93.6px"><span>0</span></div><div class="c pi" style="left:1072.8px;width:66.96px"><span>56</span></div><div class="c mt" style="left:1139.76px;width:93.36px"><span>16mm HMR</span></div><div class="c un" style="left:1233.12px;width:84.72px"><span>56</span></div><div class="c jn" style="left:1317.84px;width:80.16px"><span>Sample1</span></div></div>
<div class="row" style="top:683.79px;height:22.133px"><div class="rh rh" style="left:0.0px;width:18.72px"></div><div class="c fp" style="left:18.72px;width:202.08px"><span>C:\machining\drawing\16mm</span></div><div class="c pn" style="left:220.8px;width:152.88px"><span>fill in this edit box to asign</span></div><div class="c ln" style="left:373.68px;width:89.52px"><span>527MM</span></div><div class="c wd" style="left:463.2px;width:76.32px"><span>720MM</span></div><div class="c th" style="left:539.52px;width:72.48px"><span>16MM</span></div><div class="c ly" style="left:612.0px;width:220.8px"><span>Border Text Screw TextEdge Shelf</span></div><div class="c qt" style="left:832.8px;width:64.8px"><span>1</span></div><div class="c ar" style="left:897.6px;width:81.6px"><span>Yes</span></div><div class="c ra" style="left:979.2px;width:93.6px"><span>0</span></div><div class="c pi" style="left:1072.8px;width:66.96px"><span>57</span></div><div class="c mt" style="left:1139.76px;width:93.36px"><span>16mm HMR</span></div><div class="c un" style="left:1233.12px;width:84.72px"><span>57</span></div><div class="c jn" style="left:1317.84px;width:80.16px"><span>Sample1</span></div></div>
<div class="row" style="top:705.92px;height:22.133px"><div class="rh rh" style="left:0.0px;width:18.72px"></div><div class="c fp" style="left:18.72px;width:202.08px"><span>C:\machining\drawing\16mm</span></div><div class="c pn" style="left:220.8px;width:152.88px"><span>fill in this edit box to asign</span></div><div class="c ln" style="left:373.68px;width:89.52px"><span>527MM</span></div><div class="c wd" style="left:463.2px;width:76.32px"><span>720MM</span></div><div class="c th" style="left:539.52px;width:72.48px"><span>16MM</span></div><div class="c ly" style="left:612.0px;width:220.8px"><span>Screw TextEdge Border Shelf Text</span></div><div class="c qt" style="left:832.8px;width:64.8px"><span>1</span></div><div class="c ar" style="left:897.6px;width:81.6px"><span>Yes</span></div><div class="c ra" style="left:979.2px;width:93.6px"><span>0</span></div><div class="c pi" style="left:1072.8px;width:66.96px"><span>58</span></div><div class="c mt" style="left:1139.76px;width:93.36px"><span>16mm HMR</span></div><div class="c un" style="left:1233.12px;width:84.72px"><span>58</span></div><div class="c jn" style="left:1317.84px;width:80.16px"><span>Sample1</span></div></div>
<div class="row" style="top:728.06px;height:22.133px"><div class="rh rh" style="left:0.0px;width:18.72px"></div><div class="c fp" style="left:18.72px;width:202.08px"><span>C:\machining\drawing\16mm</span></div><div class="c pn" style="left:220.8px;width:152.88px"><span>fill in this edit box to asign</span></div><div class="c ln" style="left:373.68px;width:89.52px"><span>852MM</span></div><div class="c wd" style="left:463.2px;width:76.32px"><span>65MM</span></div><div class="c th" style="left:539.52px;width:72.48px"><span>16MM</span></div><div class="c ly" style="left:612.0px;width:220.8px"><span>Border Text TextEdge</span></div><div class="c qt" style="left:832.8px;width:64.8px"><span>1</span></div><div class="c ar" style="left:897.6px;width:81.6px"><span>Yes</span></div><div class="c ra" style="left:979.2px;width:93.6px"><span>0</span></div><div class="c pi" style="left:1072.8px;width:66.96px"><span>59</span></div><div class="c mt" style="left:1139.76px;width:93.36px"><span>16mm HMR</span></div><div class="c un" style="left:1233.12px;width:84.72px"><span>59</span></div><div class="c jn" style="left:1317.84px;width:80.16px"><span>Sample1</span></div></div>
<div class="row" style="top:750.19px;height:22.133px"><div class="rh rh" style="left:0.0px;width:18.72px"></div><div class="c fp" style="left:18.72px;width:202.08px"><span>C:\machining\drawing\16mm</span></div><div class="c pn" style="left:220.8px;width:152.88px"><span>fill in this edit box to asign</span></div><div class="c ln" style="left:373.68px;width:89.52px"><span>852MM</span></div><div class="c wd" style="left:463.2px;width:76.32px"><span>65MM</span></div><div class="c th" style="left:539.52px;width:72.48px"><span>16MM</span></div><div class="c ly" style="left:612.0px;width:220.8px"><span>Text Border TextEdge</span></div><div class="c qt" style="left:832.8px;width:64.8px"><span>1</span></div><div class="c ar" style="left:897.6px;width:81.6px"><span>Yes</span></div><div class="c ra" style="left:979.2px;width:93.6px"><span>0</span></div><div class="c pi" style="left:1072.8px;width:66.96px"><span>60</span></div><div class="c mt" style="left:1139.76px;width:93.36px"><span>16mm HMR</span></div><div class="c un" style="left:1233.12px;width:84.72px"><span>60</span></div><div class="c jn" style="left:1317.84px;width:80.16px"><span>Sample1</span></div></div>
<div class="row" style="top:772.32px;height:22.133px"><div class="rh rh" style="left:0.0px;width:18.72px"></div><div class="c fp" style="left:18.72px;width:202.08px"><span>C:\machining\drawing\16mm</span></div><div class="c pn" style="left:220.8px;width:152.88px"><span>fill in this edit box to asign</span></div><div class="c ln" style="left:373.68px;width:89.52px"><span>324MM</span></div><div class="c wd" style="left:463.2px;width:76.32px"><span>65MM</span></div><div class="c th" style="left:539.52px;width:72.48px"><span>16MM</span></div><div class="c ly" style="left:612.0px;width:220.8px"><span>Border Text TextEdge</span></div><div class="c qt" style="left:832.8px;width:64.8px"><span>1</span></div><div class="c ar" style="left:897.6px;width:81.6px"><span>Yes</span></div><div class="c ra" style="left:979.2px;width:93.6px"><span>0</span></div><div class="c pi" style="left:1072.8px;width:66.96px"><span>61</span></div><div class="c mt" style="left:1139.76px;width:93.36px"><span>16mm HMR</span></div><div class="c un" style="left:1233.12px;width:84.72px"><span>61</span></div><div class="c jn" style="left:1317.84px;width:80.16px"><span>Sample1</span></div></div>
<div class="row" style="top:794.45px;height:22.133px"><div class="rh rh" style="left:0.0px;width:18.72px"></div><div class="c fp" style="left:18.72px;width:202.08px"><span>C:\machining\drawing\16mm</span></div><div class="c pn" style="left:220.8px;width:152.88px"><span>fill in this edit box to asign</span></div><div class="c ln" style="left:373.68px;width:89.52px"><span>420MM</span></div><div class="c wd" style="left:463.2px;width:76.32px"><span>65MM</span></div><div class="c th" style="left:539.52px;width:72.48px"><span>16MM</span></div><div class="c ly" style="left:612.0px;width:220.8px"><span>Text Border TextEdge</span></div><div class="c qt" style="left:832.8px;width:64.8px"><span>1</span></div><div class="c ar" style="left:897.6px;width:81.6px"><span>Yes</span></div><div class="c ra" style="left:979.2px;width:93.6px"><span>0</span></div><div class="c pi" style="left:1072.8px;width:66.96px"><span>62</span></div><div class="c mt" style="left:1139.76px;width:93.36px"><span>16mm HMR</span></div><div class="c un" style="left:1233.12px;width:84.72px"><span>62</span></div><div class="c jn" style="left:1317.84px;width:80.16px"><span>Sample1</span></div></div>
<div class="row" style="top:816.59px;height:22.133px"><div class="rh rh" style="left:0.0px;width:18.72px"></div><div class="c fp" style="left:18.72px;width:202.08px"><span>C:\machining\drawing\16mm</span></div><div class="c pn" style="left:220.8px;width:152.88px"><span>fill in this edit box to asign</span></div><div class="c ln" style="left:373.68px;width:89.52px"><span>850MM</span></div><div class="c wd" style="left:463.2px;width:76.32px"><span>506MM</span></div><div class="c th" style="left:539.52px;width:72.48px"><span>16MM</span></div><div class="c ly" style="left:612.0px;width:220.8px"><span>TextEdge Border Text</span></div><div class="c qt" style="left:832.8px;width:64.8px"><span>1</span></div><div class="c ar" style="left:897.6px;width:81.6px"><span>Yes</span></div><div class="c ra" style="left:979.2px;width:93.6px"><span>0</span></div><div class="c pi" style="left:1072.8px;width:66.96px"><span>63</span></div><div class="c mt" style="left:1139.76px;width:93.36px"><span>16mm HMR</span></div><div class="c un" style="left:1233.12px;width:84.72px"><span>63</span></div><div class="c jn" style="left:1317.84px;width:80.16px"><span>Sample1</span></div></div>
<div class="sb" style="left:1403.52px;top:0;width:15.6px;bottom:0"><div class="thumb" style="top:243.96px;height:323.28px"></div></div>
</div>
<div id="panel" style="left:1434.2px;top:158.6px;width:469px;height:836.6px"></div>
<div id="zoom" style="left:1441.5px;top:981px">Zoom:100%</div>
<svg id="ov" width="1917" height="1008" viewBox="0 0 798.75 420">
<!-- window controls -->
<rect x="756" y="4.15" width="3.3" height="0.9" fill="#fff"/>
<rect x="772.3" y="2.5" width="3.3" height="4" rx="0.5" fill="none" stroke="#fff" stroke-width="0.6"/>
<rect x="772.3" y="2.3" width="3.3" height="1.1" fill="#fff"/>
<path d="M789.1 3 L792.1 6 M792.1 3 L789.1 6" stroke="#fff" stroke-width="0.85" fill="none"/>
<!-- ribbon icons -->
<g fill="none" stroke="#1c1c1c" stroke-width="1.05" stroke-linejoin="round">
<path d="M18.3 31.2 V38.6 M14.1 34.5 L18.3 38.7 L22.5 34.5"/>
<path d="M9.4 37.2 V42.2 Q9.4 43.2 10.4 43.2 H26.3 Q27.3 43.2 27.3 42.2 V37.2" stroke-width="1.12"/>
<path d="M55.6 39 V31.6 M51.4 35.7 L55.6 31.5 L59.8 35.7"/>
<path d="M46.4 37.2 V42.2 Q46.4 43.2 47.4 43.2 H64 Q65 43.2 65 42.2 V37.2" stroke-width="1.12"/>
</g>
<text x="13.1" y="30" textLength="10.3" lengthAdjust="spacingAndGlyphs" font-family="Liberation Sans, sans-serif" font-size="7.3" fill="#111" stroke="#111" stroke-width="0.3">DXF</text>
<text x="50.4" y="29.6" textLength="10.3" lengthAdjust="spacingAndGlyphs" font-family="Liberation Sans, sans-serif" font-size="7.3" fill="#111" stroke="#111" stroke-width="0.3">DXT</text>
<path d="M12.3 83.52H587.0M12.3 92.74H587.0M12.3 101.97H587.0M12.3 111.19H587.0M12.3 120.41H587.0M12.3 129.63H587.0M12.3 138.86H587.0M12.3 148.08H587.0M12.3 157.30H587.0M12.3 166.52H587.0M12.3 175.74H587.0M12.3 184.97H587.0M12.3 194.19H587.0M12.3 203.41H587.0M12.3 212.63H587.0M12.3 221.86H587.0M12.3 231.08H587.0M12.3 240.30H587.0M12.3 249.52H587.0M12.3 258.74H587.0M12.3 267.97H587.0M12.3 277.19H587.0M12.3 286.41H587.0M12.3 295.63H587.0M12.3 304.86H587.0M12.3 314.08H587.0M12.3 323.30H587.0M12.3 332.52H587.0M12.3 341.74H587.0M12.3 350.97H587.0M12.3 360.19H587.0M12.3 369.41H587.0M12.3 378.63H587.0M12.3 387.85H587.0M12.3 397.08H587.0M12.3 406.30H587.0" fill="none" stroke="#b9b9b9" stroke-width="0.5"/>
<path d="M96.5 74.3V415.0M160.2 74.3V415.0M197.5 74.3V415.0M229.3 74.3V415.0M259.5 74.3V415.0M351.5 74.3V415.0M378.5 74.3V415.0M412.5 74.3V415.0M451.5 74.3V415.0M479.4 74.3V415.0M518.3 74.3V415.0M553.6 74.3V415.0M587.0 74.3V415.0" fill="none" stroke="#b9b9b9" stroke-width="0.5"/>
<path d="M4.5 83.52H12.3M4.5 92.74H12.3M4.5 101.97H12.3M4.5 111.19H12.3M4.5 120.41H12.3M4.5 129.63H12.3M4.5 138.86H12.3M4.5 148.08H12.3M4.5 157.30H12.3M4.5 166.52H12.3M4.5 175.74H12.3M4.5 184.97H12.3M4.5 194.19H12.3M4.5 203.41H12.3M4.5 212.63H12.3M4.5 221.86H12.3M4.5 231.08H12.3M4.5 240.30H12.3M4.5 249.52H12.3M4.5 258.74H12.3M4.5 267.97H12.3M4.5 277.19H12.3M4.5 286.41H12.3M4.5 295.63H12.3M4.5 304.86H12.3M4.5 314.08H12.3M4.5 323.30H12.3M4.5 332.52H12.3M4.5 341.74H12.3M4.5 350.97H12.3M4.5 360.19H12.3M4.5 369.41H12.3M4.5 378.63H12.3M4.5 387.85H12.3M4.5 397.08H12.3M4.5 406.30H12.3M4.6 66.3V415.0M12.3 66.3V415.0" fill="none" stroke="#909090" stroke-width="0.55"/>
<path d="M4.5 66.3H587.0M4.5 74.3H587.0M96.5 66.3V74.3M160.2 66.3V74.3M197.5 66.3V74.3M229.3 66.3V74.3M259.5 66.3V74.3M351.5 66.3V74.3M378.5 66.3V74.3M412.5 66.3V74.3M451.5 66.3V74.3M479.4 66.3V74.3M518.3 66.3V74.3M553.6 66.3V74.3M587.0 66.3V74.3" fill="none" stroke="#8a8a8a" stroke-width="0.58"/>
<!-- table scrollbar arrows -->
<path d="M591.05 70.95 L592.55 69.45 L594.05 70.95" fill="none" stroke="#3a3a3a" stroke-width="1"/>
<path d="M591.05 411.1 L592.55 412.6 L594.05 411.1" fill="none" stroke="#3a3a3a" stroke-width="1"/>
<polygon points="581.8,71.1 585.1,71.1 583.45,69.3" fill="#333"/>
<!-- preview panel drawing -->
<g>
<clipPath id="pc"><rect x="597.6" y="66.1" width="195.4" height="348.8"/></clipPath>
<g clip-path="url(#pc)">
<polygon points="696.3,153.9 791.8,185.4 696.4,215.4 601.1,185.4" fill="#b9e3df"/>
<polygon points="597,193.6 691.8,224 691.8,327.3 597,296.5" fill="#d3e3c1"/>
<polygon points="701,224.6 793,194.6 793,297 701,327.3" fill="#aed3ea"/>
<polygon points="597,241.2 691.8,271.6 691.8,280.2 597,249.8" fill="#fff"/>
<polygon points="701,271.9 793,241.9 793,250.5 701,280.5" fill="#fff"/>
<g fill="#4646ff">
<rect x="619.25" y="68.75" width="1.4" height="0.75"/><rect x="668.05" y="68.75" width="1.4" height="0.75"/><rect x="717.25" y="68.75" width="1.4" height="0.75"/>
<rect x="615.55" y="142.75" width="1.4" height="0.75"/><rect x="615.55" y="151.55" width="1.4" height="0.75"/><rect x="615.55" y="160.15" width="1.4" height="0.75"/><rect x="615.55" y="168.75" width="1.4" height="0.75"/><rect x="615.55" y="177.25" width="1.4" height="0.75"/>
<rect x="716.45" y="142.75" width="1.4" height="0.75"/><rect x="716.45" y="151.55" width="1.4" height="0.75"/><rect x="716.45" y="160.15" width="1.4" height="0.75"/><rect x="716.45" y="168.75" width="1.4" height="0.75"/><rect x="716.45" y="177.25" width="1.4" height="0.75"/>
<rect x="736.55" y="248.05" width="1.4" height="0.75"/><rect x="736.55" y="252.45" width="1.4" height="0.75"/>
</g>
<path d="M728.2 149.6 L734 152.3 L728.3 155.2 L733.9 158 L728.3 160.6 L734 163.3 L728.4 166 L734 168.6 L728.3 171.3 L733.6 174 L728.3 176.8" fill="none" stroke="#f04040" stroke-width="0.6"/>
<rect x="598.7" y="67.35" width="140.8" height="191.95" fill="none" stroke="#f04c4c" stroke-width="0.6"/>
<text x="669.9" y="81.4" textLength="55.2" lengthAdjust="spacingAndGlyphs" font-family="Liberation Sans, sans-serif" font-size="2.3" font-weight="bold" fill="#000" stroke="#000" stroke-width="0.3">fill in this edit box to asign unit number 0 16mm HMR 27</text>
</g>
<path d="M598.25 414.9 V66.55 H793" fill="none" stroke="#8e8e8e" stroke-width="1.05"/>
</g>
</svg>
</div>
<div id="edge2"></div><div id="edge"></div>
</body></html>
